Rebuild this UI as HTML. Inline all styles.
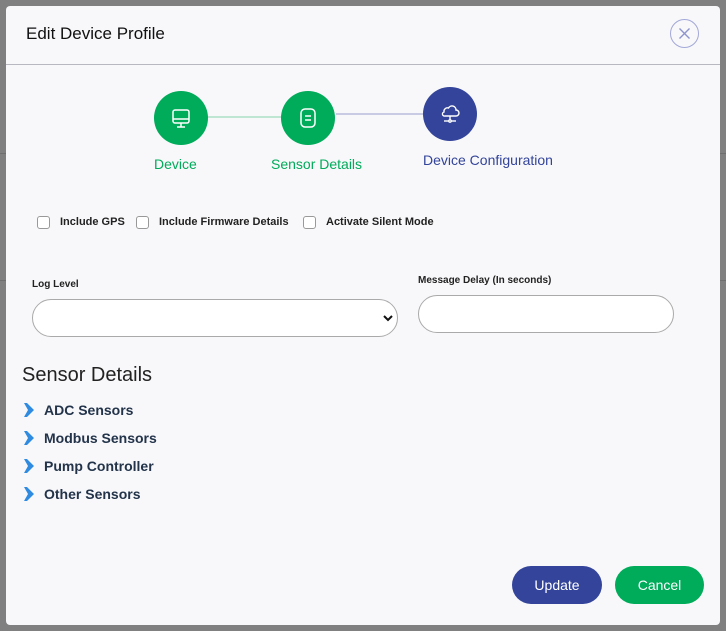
<!DOCTYPE html>
<html><head><style>
body{margin:0;width:726px;height:631px;background:#808080;font-family:"Liberation Sans",sans-serif;position:relative;overflow:hidden}
.bgline{position:absolute;left:0;right:0;height:1px;background:#6f6f6f}
.modal{position:absolute;left:6px;top:6px;width:714px;height:619px;background:#f8f8fa;border-radius:4px}
.abs{position:absolute}
.t{font-size:17px;color:#111;left:20px;top:18px}
.hr{left:0;right:0;top:58px;height:1px;background:#b8b8c0}
.close{left:664px;top:13px;width:27px;height:27px;border:1.5px solid #a3a8d8;border-radius:50%}
.circ{border-radius:50%;width:54px;height:54px}
.lbl{font-size:14px}
.cb{width:11px;height:11px;border:1px solid #999;border-radius:3px;background:#fff}
.ct{font-size:11px;font-weight:bold;color:#222}
.fl{font-size:10px;font-weight:bold;color:#222}
.inp{background:#fff;border:1px solid #aaa;border-radius:19px;height:36px}
.item{font-size:14px;font-weight:bold;color:#22334a;left:38px}
.arr{left:17px}
.btn{border-radius:20px;color:#fff;font-size:14px;text-align:center;line-height:38px;height:38px}
</style></head><body>
<div class="bgline" style="top:153px"></div>
<div class="bgline" style="top:280px"></div>
<div class="modal">
<div class="abs t">Edit Device Profile</div>
<div class="abs close"><svg width="27" height="27" viewBox="0 0 27 27"><path d="M8.5 8.5l10 10M18.5 8.5l-10 10" stroke="#8d93cc" stroke-width="1.4"/></svg></div>
<div class="abs hr"></div>
<div class="abs" style="left:200px;top:110px;width:100px;height:2px;background:#bfe6d2"></div>
<div class="abs" style="left:330px;top:107px;width:100px;height:2px;background:#c9cbe4"></div>
<div class="abs circ" style="left:148px;top:85px;background:#00ab5a"></div>
<svg class="abs" style="left:163px;top:101px" width="24" height="24" viewBox="0 0 24 24" fill="none" stroke="#fff" stroke-width="1.5"><rect x="4" y="3" width="16" height="13" rx="2"/><line x1="4" y1="12" x2="20" y2="12"/><line x1="12" y1="16" x2="12" y2="20"/><line x1="8" y1="20" x2="16" y2="20"/></svg>
<div class="abs circ" style="left:275px;top:85px;background:#00ab5a"></div>
<svg class="abs" style="left:290px;top:100px" width="24" height="24" viewBox="0 0 24 24" fill="none" stroke="#fff" stroke-width="1.5"><rect x="5" y="3" width="14" height="18" rx="4"/><line x1="9" y1="10" x2="15" y2="10"/><line x1="9" y1="14" x2="15" y2="14"/></svg>
<div class="abs circ" style="left:417px;top:81px;background:#33449a"></div>
<svg class="abs" style="left:432px;top:95px" width="24" height="24" viewBox="0 0 24 24" fill="none" stroke="#fff" stroke-width="1.4"><path d="M7 15h11a3 3 0 0 0 0-6 4 4 0 0 0-7.5-2A3.5 3.5 0 0 0 6 11a2 2 0 0 0 1 4z"/><line x1="12" y1="15" x2="12" y2="19"/><circle cx="12" cy="20" r="1.2"/><line x1="6" y1="20" x2="10.5" y2="20"/><line x1="13.5" y1="20" x2="18" y2="20"/></svg>
<div class="abs lbl" style="left:148px;top:150px;color:#00ab5a">Device</div>
<div class="abs lbl" style="left:265px;top:150px;color:#00ab5a">Sensor Details</div>
<div class="abs lbl" style="left:417px;top:146px;color:#33449a">Device Configuration</div>
<div class="abs cb" style="left:31px;top:210px"></div><div class="abs ct" style="left:54px;top:210px">Include GPS</div>
<div class="abs cb" style="left:130px;top:210px"></div><div class="abs ct" style="left:153px;top:210px">Include Firmware Details</div>
<div class="abs cb" style="left:297px;top:210px"></div><div class="abs ct" style="left:320px;top:210px">Activate Silent Mode</div>
<div class="abs fl" style="left:26px;top:273px">Log Level</div>
<div class="abs fl" style="left:412px;top:269px">Message Delay (In seconds)</div>
<div class="abs inp" style="left:26px;top:293px;width:364px"></div>
<svg class="abs" style="left:377px;top:308px" width="10" height="8" viewBox="0 0 10 8"><path d="M1 2l4 4 4-4" stroke="#111" stroke-width="2" fill="none"/></svg>
<div class="abs inp" style="left:412px;top:289px;width:254px"></div>
<div class="abs" style="left:16px;top:358px;font-size:20px;color:#222">Sensor Details</div>
<svg class="abs arr" style="top:396px" width="12" height="16" viewBox="0 0 12 16"><path d="M1 1h3l7 7-7 7H1l4-7z" fill="#2f8be0"/></svg><div class="abs item" style="top:396px">ADC Sensors</div>
<svg class="abs arr" style="top:424px" width="12" height="16" viewBox="0 0 12 16"><path d="M1 1h3l7 7-7 7H1l4-7z" fill="#2f8be0"/></svg><div class="abs item" style="top:424px">Modbus Sensors</div>
<svg class="abs arr" style="top:452px" width="12" height="16" viewBox="0 0 12 16"><path d="M1 1h3l7 7-7 7H1l4-7z" fill="#2f8be0"/></svg><div class="abs item" style="top:452px">Pump Controller</div>
<svg class="abs arr" style="top:480px" width="12" height="16" viewBox="0 0 12 16"><path d="M1 1h3l7 7-7 7H1l4-7z" fill="#2f8be0"/></svg><div class="abs item" style="top:480px">Other Sensors</div>
<div class="abs btn" style="left:506px;top:560px;width:90px;background:#33449a">Update</div>
<div class="abs btn" style="left:609px;top:560px;width:89px;background:#00ab5a">Cancel</div>
</div>
</body></html>
